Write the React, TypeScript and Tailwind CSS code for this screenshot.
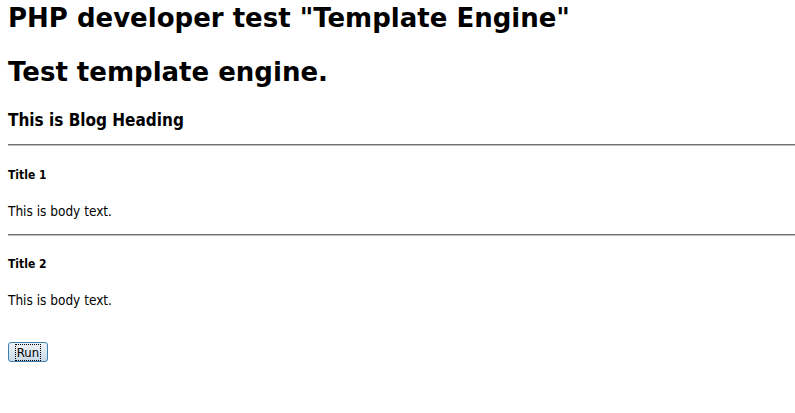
export default function App() {
  const posts = [
    { title: "Title 1", body: "This is body text." },
    { title: "Title 2", body: "This is body text." },
  ];

  return (
    <div className="min-h-[413px] bg-white pl-2 pt-[3px] text-black font-['DejaVu_Sans',sans-serif]">
      <h1 className="text-[26px] font-bold leading-[30px]">PHP developer test "Template Engine"</h1>
      <h1 className="mt-[24px] text-[26px] font-bold leading-[30px]">Test template engine.</h1>
      <h3 className="mt-[23px] font-['DejaVu_Sans_Condensed','DejaVu_Sans',sans-serif] text-[17px] font-bold leading-[20px]">
        This is Blog Heading
      </h3>

      {posts.map((p, i) => (
        <div key={p.title}>
          <div
            className={`${i === 0 ? "mt-[14px]" : "mt-[15px]"} h-[2px] border-t border-t-[#6f6f6f] border-b border-b-[#c0c0c0]`}
          />
          <h5
            className={`${i === 0 ? "mt-[22px]" : "mt-[21px]"} font-['DejaVu_Sans_Condensed','DejaVu_Sans',sans-serif] text-[12px] font-bold leading-[14px]`}
          >
            {p.title}
          </h5>
          <p className="mt-[21px] font-['DejaVu_Sans_Condensed','DejaVu_Sans',sans-serif] text-[13.5px] leading-[16px]">
            {p.body}
          </p>
        </div>
      ))}

      <button className="mt-[34px] flex h-[20px] w-[40px] items-center justify-center rounded-[3px] border border-[#3c7fb1] bg-gradient-to-b from-[#eef3f7] to-[#c9d9e6] font-['DejaVu_Sans_Condensed','DejaVu_Sans',sans-serif] text-[13px] leading-[15px]">
        <span className="border border-dotted border-black px-[1px]">Run</span>
      </button>
    </div>
  );
}
